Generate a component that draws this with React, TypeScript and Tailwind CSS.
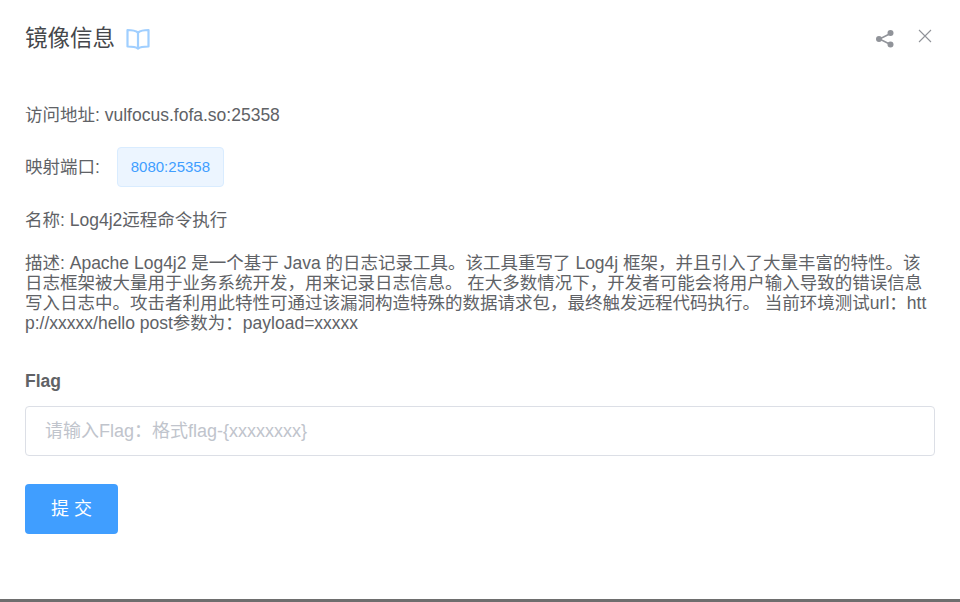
const font = "[font-family:'Liberation_Sans','Noto_Sans_CJK_SC',sans-serif]";

function BookIcon() {
  return (
    <svg width="24" height="22" viewBox="0 0 24 22" fill="none" stroke="#a0cfff" strokeWidth="2.200" strokeLinejoin="round">
      <path d="M12 4.500C10 3 6 2 1.500 2V18.500C6 18.500 10 19 12 20.500C14 19 18 18.500 22.500 18.500V2C18 2 14 3 12 4.500Z" />
      <path d="M12 4.500V20.500" />
    </svg>
  );
}

function ShareIcon() {
  return (
    <svg width="20" height="20" viewBox="0 0 20 20" fill="#909399" stroke="#909399">
      <path d="M15.500 4.500L4.500 10L15.500 15.500" fill="none" strokeWidth="1.500" />
      <circle cx="15.500" cy="4" r="3" stroke="none" />
      <circle cx="4" cy="10" r="3" stroke="none" />
      <circle cx="15.500" cy="15.500" r="3" stroke="none" />
    </svg>
  );
}

function CloseIcon() {
  return (
    <svg width="14" height="14" viewBox="0 0 14 14" stroke="#909399" strokeWidth="1.100">
      <path d="M1 1L13 13M13 1L1 13" />
    </svg>
  );
}

export default function App() {
  return (
    <div className={`${font} flex h-[602px] w-[960px] flex-col overflow-hidden bg-white text-[#606266]`}>
      <div className="flex h-[78px] shrink-0 items-center justify-between pl-[25px] pr-[28px]">
        <div className="flex items-center gap-[11px]">
          <span className="text-[22.500px] leading-[30px] text-[#45474b]">镜像信息</span>
          <BookIcon />
        </div>
        <div className="flex items-center gap-[23px]">
          <ShareIcon />
          <span className="mb-[6px]">
            <CloseIcon />
          </span>
        </div>
      </div>

      <div className="flex flex-1 flex-col px-[25px] pt-[27px] text-[17.500px] leading-[20.300px]">
        <p>访问地址: vulfocus.fofa.so:25358</p>
        <div className="mt-[22px] flex items-center gap-[17px]">
          <span>映射端口:</span>
          <span className="flex h-[40px] w-[107px] items-center justify-center rounded-[4px] border border-[#d9ecff] bg-[#ecf5ff] text-[15px] text-[#409eff]">
            8080:25358
          </span>
        </div>
        <p className="mt-[23px]">名称: Log4j2远程命令执行</p>
        <p className="mt-[22px] break-all">
          描述: Apache Log4j2 是一个基于 Java 的日志记录工具。该工具重写了 Log4j 框架，并且引入了大量丰富的特性。该日志框架被大量用于业务系统开发，用来记录日志信息。 在大多数情况下，开发者可能会将用户输入导致的错误信息写入日志中。攻击者利用此特性可通过该漏洞构造特殊的数据请求包，最终触发远程代码执行。 当前环境测试url：http://xxxxx/hello post参数为：payload=xxxxx
        </p>
        <label className="mt-[37px] text-[17.500px] font-bold">Flag</label>
        <input
          readOnly
          placeholder="请输入Flag：格式flag-{xxxxxxxx}"
          className="mt-[15px] h-[50px] w-full rounded-[4px] border border-[#dcdfe6] px-[19px] text-[18px] outline-none placeholder:text-[#c0c4cc]"
        />
        <button className="mt-[28px] h-[50px] w-[93px] rounded-[4px] bg-[#409eff] text-[18px] text-white">提 交</button>
      </div>

      <div className="h-[3px] shrink-0 bg-[#6e6e6e]" />
    </div>
  );
}
